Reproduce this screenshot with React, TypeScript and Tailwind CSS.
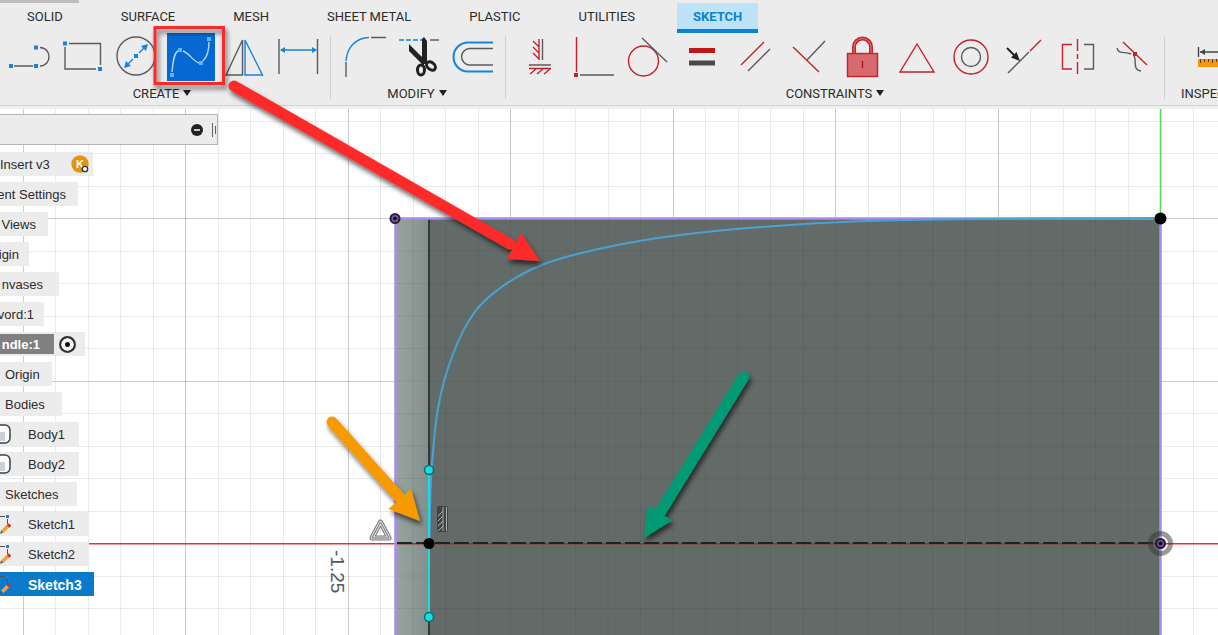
import type { ReactNode } from 'react';

const BLUE = '#1583e0';
const RED = '#c8202a';
const GRAY = '#5a5a5a';

type Tool = { name: string; art: ReactNode; active?: boolean };

const Dot = ({ x, y, color = BLUE }: { x: number; y: number; color?: string }) => (
  <rect x={x - 2} y={y - 2} width="4" height="4" fill={color} stroke="none" />
);

const tabs = ['SOLID', 'SURFACE', 'MESH', 'SHEET METAL', 'PLASTIC', 'UTILITIES', 'SKETCH'];

const createTools: Tool[] = [
  {
    name: 'Line',
    art: (
      <>
        <path d="M9 33H28M35 14.5C47 15 47 32.5 35 33" stroke={GRAY} />
        <Dot x={6} y={33} />
        <Dot x={31} y={33} />
        <Dot x={31} y={14.5} />
      </>
    ),
  },
  {
    name: 'Rectangle',
    art: (
      <>
        <path d="M10 10.5H41.5V32M37 36H6V14" stroke={GRAY} />
        <Dot x={6} y={10.5} />
        <Dot x={41} y={36} />
      </>
    ),
  },
  {
    name: 'Circle',
    art: (
      <>
        <circle cx="23" cy="23" r="19" stroke={GRAY} />
        <path d="M26 20L31 15M20 26L15 31" stroke={BLUE} />
        <path d="M35 11L33 18L28 13ZM11 35L13 28L18 33Z" fill={BLUE} />
        <Dot x={23} y={23} />
      </>
    ),
  },
  {
    name: 'Spline',
    active: true,
    art: (
      <>
        <path d="M5 39C6 28 7 20 11 18M16 18C22 20 27 29 32 30M36 28C40 24 42 17 42 9" stroke="#b9d7f2" />
        <Dot x={5} y={42} color="#5db4ff" />
        <Dot x={13} y={17} color="#5db4ff" />
        <Dot x={34} y={30} color="#5db4ff" />
        <Dot x={42} y={6} color="#5db4ff" />
      </>
    ),
  },
  {
    name: 'Mirror',
    art: (
      <>
        <path d="M5 42L21.5 7V42Z" stroke={GRAY} />
        <path d="M24 7L41.5 42H24Z" stroke={BLUE} />
      </>
    ),
  },
  {
    name: 'Sketch Dimension',
    art: (
      <>
        <path d="M4 6V41M42.5 6V41" stroke={GRAY} />
        <path d="M6 17H41" stroke={BLUE} />
        <path d="M5 17L10 14V20ZM42 17L37 14V20Z" fill={BLUE} />
      </>
    ),
  },
];

const modifyTools: Tool[] = [
  {
    name: 'Fillet',
    art: (
      <>
        <path d="M5 28C6 15 14 5 28 4.5" stroke={BLUE} />
        <path d="M5 29V44M30 4.5H45" stroke={GRAY} />
      </>
    ),
  },
  {
    name: 'Trim',
    art: (
      <>
        <path d="M4 7H27" stroke={BLUE} strokeDasharray="5 2" />
        <path d="M35 7H44" stroke={GRAY} />
        <path d="M29 4L32 8V31H27V6ZM14 11L29 26L29 33L14 18Z" fill="#222" />
        <ellipse cx="26" cy="37" rx="3.5" ry="5" stroke="#222" strokeWidth="3" />
        <ellipse cx="36" cy="33" rx="3.5" ry="5" transform="rotate(-50 36 33)" stroke="#222" strokeWidth="3" />
      </>
    ),
  },
  {
    name: 'Offset',
    art: (
      <>
        <path d="M44 9.5H19A14.5 14.5 0 0 0 19 38.5H44" stroke={BLUE} strokeWidth="2" />
        <path d="M44 15.5H20A8.3 8.3 0 0 0 20 32H44" stroke={GRAY} />
      </>
    ),
  },
];

const constraintTools: Tool[] = [
  {
    name: 'Horizontal/Vertical',
    art: (
      <>
        <path d="M23 6V27M23 14L17 8M23 20L17 14M23 26L17 20M13 35.5H35M20 36L14 41M27 36L21 41M34 36L28 41" stroke={RED} />
        <path d="M26.5 6V27M13 32H35" stroke={GRAY} />
      </>
    ),
  },
  {
    name: 'Coincident',
    art: (
      <>
        <path d="M6.5 4V39" stroke={RED} />
        <path d="M10 42H44" stroke={GRAY} />
        <Dot x={6} y={42} color={RED} />
      </>
    ),
  },
  {
    name: 'Tangent',
    art: (
      <>
        <circle cx="19.5" cy="28" r="15" stroke={RED} />
        <path d="M18 5L43 29" stroke={GRAY} />
      </>
    ),
  },
  {
    name: 'Equal',
    art: (
      <>
        <path d="M11 17.5H37" stroke="#bd1717" strokeWidth="5" />
        <path d="M11 30H37" stroke="#4a4a4a" strokeWidth="5" />
      </>
    ),
  },
  {
    name: 'Parallel',
    art: (
      <>
        <path d="M9 32L32 9" stroke={RED} />
        <path d="M16 38L38 16" stroke={GRAY} />
      </>
    ),
  },
  {
    name: 'Perpendicular',
    art: (
      <>
        <path d="M7 14L33 39" stroke={RED} />
        <path d="M21 27L39 8" stroke={GRAY} />
      </>
    ),
  },
  {
    name: 'Fix/Unfix',
    art: (
      <>
        <path d="M14 20V14A8.5 8.5 0 0 1 31 14V20" stroke={RED} strokeWidth="4" />
        <path d="M14 20V14A8.5 8.5 0 0 1 31 14V20" stroke="#df8585" strokeWidth="1" />
        <rect x="7.5" y="20.5" width="30" height="23" fill="#d66a6e" stroke={RED} />
        <path d="M22.5 28V35" stroke="#b01018" />
      </>
    ),
  },
  { name: 'Midpoint', art: <path d="M23 11L40 39H6Z" stroke={RED} /> },
  {
    name: 'Concentric',
    art: (
      <>
        <circle cx="23" cy="24" r="17" stroke={RED} />
        <circle cx="23" cy="24" r="9.5" stroke={GRAY} />
      </>
    ),
  },
  {
    name: 'Collinear',
    art: (
      <>
        <path d="M6 40L27 19" stroke={GRAY} />
        <path d="M28 18L39 7" stroke={RED} />
        <path d="M5 15L12 22" stroke="#222" strokeWidth="2" />
        <path d="M18 28L9 24.5L14.5 19Z" fill="#222" />
      </>
    ),
  },
  {
    name: 'Symmetry',
    art: (
      <>
        <path d="M16 11.5H6.5V36H16M21.5 6V18M21.5 21V26M21.5 29V41" stroke={RED} />
        <path d="M28 11.5H37.5V36H28" stroke={GRAY} />
      </>
    ),
  },
  {
    name: 'Curvature',
    art: (
      <>
        <path d="M7 15C9 22 15 18 21 21M24 23C27 27 22 37 31 38" stroke={GRAY} />
        <path d="M13 9L37 32" stroke={RED} />
        <Dot x={25} y={21} color={RED} />
      </>
    ),
  },
];

const inspectTools: Tool[] = [
  {
    name: 'Measure',
    art: (
      <>
        <path d="M7.5 14V24M9 19H44M44.5 14V24" stroke="#444" />
        <path d="M9 19L14 16V22Z" fill="#444" />
        <rect x="7" y="26" width="38" height="8" fill="#f7950d" />
        <path d="M9.5 26V30M13.5 26V29M17.5 26V29M21.5 26V30M25.5 26V29M29.5 26V30" stroke="#5b3b0c" strokeWidth="1" />
      </>
    ),
  },
];

const ToolGroup = ({ label, tools }: { label: string; tools: Tool[] }) => (
  <div className="flex shrink-0 flex-col items-center">
    <div className="flex">
      {tools.map((tool) => (
        <button key={tool.name} type="button" aria-label={tool.name} className="w-[54px] px-[3px]">
          <svg
            viewBox="0 0 48 48"
            fill="none"
            strokeWidth="1.4"
            className={tool.active ? 'size-12 bg-[#0568d3]' : 'size-12'}
          >
            {tool.art}
          </svg>
        </button>
      ))}
    </div>
    <button type="button" className="flex h-6 items-center gap-1 pt-[2px] pr-1 text-[13px] leading-5 text-[#2b2b2b]">
      {label}
      <svg viewBox="0 0 8 6" className="mb-[2px] h-[6px] w-2" fill="#222">
        <path d="M0 0H8L4 6Z" />
      </svg>
    </button>
  </div>
);

const Separator = ({ className }: { className: string }) => (
  <div className={`mt-[3px] h-[63px] w-px shrink-0 bg-[#cfcfcf] ${className}`} />
);

const BodyIcon = () => (
  <svg viewBox="0 0 11 20" className="h-5 w-[11px] shrink-0">
    <rect x="-8" y="1" width="18" height="18" rx="5" fill="#fff" stroke="#3b4148" strokeWidth="1.5" />
    <rect x="0" y="8" width="5" height="9" fill="#ccd1d8" />
  </svg>
);

const SketchIcon = () => (
  <svg viewBox="0 0 11 20" className="h-5 w-[11px] shrink-0" fill="none">
    <path d="M0 2.5H5M7.5 5V11" stroke="#555" strokeDasharray="5 2" />
    <rect x="6" y="1" width="3" height="3" fill={BLUE} />
    <path d="M2 18L8 12" stroke="#f5a32f" strokeWidth="3.5" />
    <path d="M8 12.5L10 10.5" stroke="#e3262e" strokeWidth="3.5" />
    <path d="M0 20L3 18.5L1 16.5Z" fill="#555" />
  </svg>
);

type Row = { text: string; box: string; icon?: ReactNode };

const rowsAbove: Row[] = [
  { text: 'ent Settings', box: 'w-[78px] justify-end pr-3' },
  { text: 'Views', box: 'w-12 justify-end pr-3' },
  { text: 'igin', box: 'w-[29px] justify-end pr-[10px]' },
  { text: 'nvases', box: 'w-[59px] justify-end pr-4' },
  { text: 'vord:1', box: 'w-11 justify-end pr-[10px]' },
];

const rowsBelow: Row[] = [
  { text: 'Origin', box: 'w-[52px] pl-[5px]' },
  { text: 'Bodies', box: 'w-[62px] pl-[5px]' },
  { text: 'Body1', box: 'w-[79px] gap-[17px]', icon: <BodyIcon /> },
  { text: 'Body2', box: 'w-[79px] gap-[17px]', icon: <BodyIcon /> },
  { text: 'Sketches', box: 'w-[77px] pl-[5px]' },
  { text: 'Sketch1', box: 'w-[89px] gap-[17px]', icon: <SketchIcon /> },
  { text: 'Sketch2', box: 'w-[89px] gap-[17px]', icon: <SketchIcon /> },
];

const TreeRow = ({ text, box, icon }: Row) => (
  <li>
    <button
      type="button"
      className={`flex h-6 items-center overflow-hidden bg-[#ececec] whitespace-nowrap ${box}`}
    >
      {icon}
      <span className="pt-[2px]">{text}</span>
    </button>
  </li>
);

const Browser = () => (
  <aside className="relative w-[218px] pt-[5px] font-['Liberation_Sans',sans-serif] text-[13px] leading-5 text-[#2b2b2b]">
    <div className="flex h-[31px] items-center justify-end gap-2 border border-l-0 border-[#b5b5b5] bg-[#ececec] pr-px">
      <button type="button" aria-label="Collapse browser">
        <svg viewBox="0 0 12 12" className="size-3">
          <circle cx="6" cy="6" r="6" fill="#222" />
          <path d="M3 6H9" stroke="#fff" strokeWidth="1.5" />
        </svg>
      </button>
      <svg viewBox="0 0 5 14" className="h-[14px] w-[5px]" stroke="#666">
        <path d="M1.5 0V14M4.5 3V11" />
      </svg>
    </div>
    <ul className="flex flex-col gap-[6px] pt-[7px]">
      <li className="flex h-6 w-[93px] items-center justify-between bg-[#ececec] pr-1">
        <span className="pt-[2px]">Insert v3</span>
        <svg viewBox="0 0 18 18" className="size-[18px]">
          <circle cx="9" cy="9" r="8.7" fill="#e2960f" />
          <text x="5" y="13" fontSize="11" fontWeight="700" fill="#fff">K</text>
          <circle cx="14" cy="14" r="2.7" fill="#fff" stroke="#333" strokeWidth="1.3" />
        </svg>
      </li>
      {rowsAbove.map((row) => (
        <TreeRow key={row.text} {...row} />
      ))}
      <li className="flex h-6 w-[85px] items-center gap-[5px] bg-[#ececec]">
        <button type="button" className="flex h-5 w-[54px] items-center justify-end bg-[#808080] pr-[14px] font-bold text-white">
          <span className="pt-px">ndle:1</span>
        </button>
        <input
          type="radio"
          name="active-component"
          aria-label="Activate component"
          defaultChecked
          className="size-[17px] appearance-none rounded-full border-2 border-[#333] bg-[#111] shadow-[inset_0_0_0_4px_#f4f4f4]"
        />
      </li>
      {rowsBelow.map((row) => (
        <TreeRow key={row.text} {...row} />
      ))}
      <li>
        <button type="button" className="flex h-6 w-[94px] items-center gap-[17px] bg-[#0a7bcb] text-[14px] font-bold text-white">
          <SketchIcon />
          <span className="pt-px">Sketch3</span>
        </button>
      </li>
    </ul>
  </aside>
);

// grid steps counted from the sketch origin
const steps = Array.from({ length: 121 }, (_, i) => i - 60);
const ORIGIN_X = 1160.5;
const ORIGIN_Y = 434.5;
const STEP = 32.5;

const Grid = () => (
  <g shapeRendering="crispEdges">
    {steps.map((n) => {
      const opacity = n % 5 === 0 ? 0.2 : 0.08;
      return (
        <g key={n} stroke="#000" strokeOpacity={opacity}>
          <line x1={ORIGIN_X + n * STEP} x2={ORIGIN_X + n * STEP} y1="0" y2="100%" />
          <line x1="0" x2="100%" y1={ORIGIN_Y + n * STEP} y2={ORIGIN_Y + n * STEP} />
        </g>
      );
    })}
  </g>
);

const SketchCanvas = () => (
  <svg className="absolute inset-0 size-full" fill="none" role="img" aria-label="Sketch canvas">
    <defs>
      <linearGradient id="edge">
        <stop offset="0" stopColor="#98a39d" />
        <stop offset="1" stopColor="#82908e" />
      </linearGradient>
    </defs>
    <Grid />
    <rect x="0" y="434" width="100%" height="1.5" fill="#e9302f" />
    <path d="M1160.5 0V109" stroke="#4fdc4f" strokeWidth="1.5" />

    <rect x="396" y="109" width="33" height="3000" fill="url(#edge)" />
    <rect x="429" y="109" width="731" height="3000" fill="#636b68" />
    <g stroke="#000" strokeOpacity="0.05">
      {steps.filter((n) => n < 0 && n > -24).map((n) => (
        <path key={n} d={`M${ORIGIN_X + n * STEP} 110V3000`} />
      ))}
      {steps.filter((n) => n > -10).map((n) => (
        <path key={n} d={`M397 ${ORIGIN_Y + n * STEP}H1159`} />
      ))}
    </g>
    <path d="M429 110V3000" stroke="#17201f" strokeWidth="1.5" />
    <path d="M395.5 3000V109.5H1160.5V3000" stroke="#a68cf0" strokeWidth="2.5" />
    <rect x="397" y="434" width="763" height="1.5" fill="#8e3536" />
    <path d="M397 434H1160" stroke="#222" strokeWidth="2" strokeDasharray="15 4" />

    <path
      d="M429.5 434C429.8 406 430.3 373 432 354C433.9 331.5 436.2 310.4 437.7 301C443.9 263.8 458.8 224.5 475 202.7C487.6 185.7 514.3 167 541.7 156C568 145.500 624 133 680 126C729 120 803 114.500 865 112C899 110.600 1017 109.400 1160 109"
      stroke="#49a2d3"
      strokeWidth="2"
    />
    <path d="M429 361V507" stroke="#12dfe3" strokeWidth="2" />
    <g fill="#12dfe3" stroke="#0e6d70" strokeWidth="1.5">
      <circle cx="429" cy="361" r="4.5" />
      <circle cx="429" cy="508" r="4.5" />
    </g>
    <circle cx="429" cy="434.5" r="5.5" fill="#000" />
    <circle cx="1160.5" cy="109.5" r="6" fill="#000" />
    <circle cx="395" cy="109.5" r="4.5" fill="#7a54b8" stroke="#29222f" strokeWidth="2" />
    <circle cx="395" cy="109.5" r="1.8" fill="#000" />
    <circle cx="1160.5" cy="434.5" r="10" stroke="#333" strokeOpacity="0.5" strokeWidth="5" />
    <circle cx="1160.5" cy="434.5" r="4.5" fill="#6e4bb0" stroke="#221c28" strokeWidth="2" />
    <circle cx="1160.5" cy="434.5" r="1.8" fill="#000" />

    <g strokeLinejoin="round">
      <path d="M380.5 413L389 429H372Z" stroke="#777" strokeWidth="5" />
      <path d="M380.5 413L389 429H372Z" stroke="#ddd" strokeWidth="3" />
      <path d="M380.5 413L389 429H372Z" stroke="#777" strokeWidth="1" />
    </g>
    <rect x="437" y="397" width="11" height="26" rx="2" fill="#3f4544" />
    <path d="M443 398V422M446.5 398V422M443 402L438 407M443 407L438 412M443 412L438 417M443 417L438 422" stroke="#a8afac" />

    <text
      transform="translate(331 441) rotate(90)"
      fill="#555"
      className="font-['Liberation_Sans',sans-serif] text-[19px]"
    >
      -1.25
    </text>
  </svg>
);

const Annotations = () => (
  <svg className="pointer-events-none absolute inset-0 size-full" fill="none" aria-hidden="true">
    <defs>
      <filter id="shadow" filterUnits="userSpaceOnUse" x="0" y="0" width="1218" height="635">
        <feDropShadow dx="2" dy="4" stdDeviation="2.5" floodColor="#000" floodOpacity="0.6" />
      </filter>
    </defs>
    <g filter="url(#shadow)">
      <rect x="155" y="27.5" width="68.5" height="56" stroke="#f92a2c" strokeWidth="3" />
    </g>
    <g filter="url(#shadow)" strokeLinecap="round" strokeWidth="11">
      <path d="M234 86L510 244" stroke="#fd2b2c" />
      <path d="M540 261L521 233L507 259Z" fill="#fd2b2c" />
      <path d="M332 422L400 498" stroke="#f79a05" />
      <path d="M420 521L411 489L388.5 509Z" fill="#f79a05" />
      <path d="M743.5 377L661 511" stroke="#049b75" />
      <path d="M644 538L647.5 505L672 520.5Z" fill="#049b75" />
    </g>
  </svg>
);

const App = () => {
  return (
    <div className="relative flex min-h-screen flex-col overflow-hidden bg-white font-['Roboto',sans-serif]">
      <header className="border-b border-[#d2d2d2] bg-[#ececec]">
        <div className="h-[3px] w-[79px] bg-[#bdbdbd]" />
        <nav className="flex gap-[26px] pl-[11px]">
          {tabs.map((tab) => (
            <button
              key={tab}
              type="button"
              className={
                tab === 'SKETCH'
                  ? 'h-[30px] border-b-4 border-[#0a84d2] bg-[#bfe3f6] px-4 pt-[2px] text-[13px] leading-6 font-bold whitespace-nowrap text-[#0a84d2]'
                  : 'h-[30px] px-4 pt-[2px] pb-1 text-[13px] leading-6 whitespace-nowrap text-[#2b2b2b]'
              }
            >
              {tab}
            </button>
          ))}
        </nav>
        <div className="flex pl-[2px]">
          <ToolGroup label="CREATE" tools={createTools} />
          <Separator className="ml-1 mr-[7px]" />
          <ToolGroup label="MODIFY" tools={modifyTools} />
          <Separator className="ml-[5px] mr-[7px]" />
          <ToolGroup label="CONSTRAINTS" tools={constraintTools} />
          <Separator className="ml-[3px] mr-4" />
          <ToolGroup label="INSPECT" tools={inspectTools} />
        </div>
      </header>
      <div className="h-[3px] bg-[#f0f0f0]" />
      <main className="relative flex-1">
        <SketchCanvas />
        <Browser />
      </main>
      <Annotations />
    </div>
  );
};

export default App;
